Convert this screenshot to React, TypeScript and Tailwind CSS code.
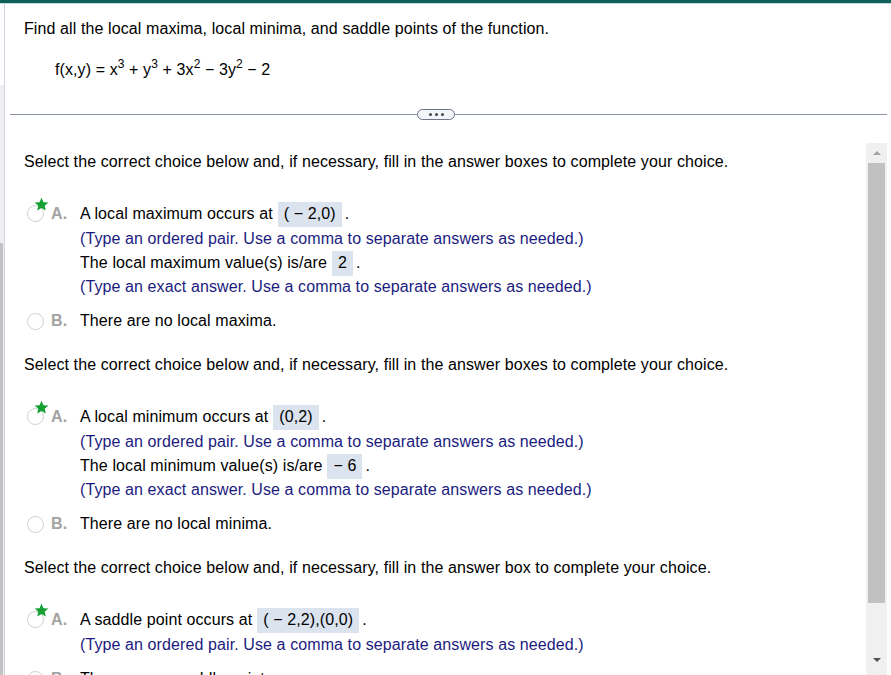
import React from 'react';

const Star = () => (
  <svg viewBox="0 0 24 24" className="absolute left-[10px] -top-[4px] w-[15px] h-[15px]">
    <path d="M12 1l3.2 7.2 7.8.7-5.9 5.1 1.8 7.7L12 17.7l-6.9 4 1.8-7.7L1 8.9l7.8-.7z" fill="#14a033" />
  </svg>
);

const Radio = ({ star }: { star?: boolean }) => (
  <div className="relative w-[27px] h-6 pl-[3px] flex items-center shrink-0">
    <div className="w-[17px] h-[17px] rounded-full border-[1.5px] border-[#cfcfcf] bg-white" />
    {star && <Star />}
  </div>
);

const Box = ({ children }: { children: React.ReactNode }) => (
  <span className="inline-flex items-center h-[25px] px-[6px] bg-[#dbe3ef] ml-[5px] mr-[3px]">{children}</span>
);

const Hint = ({ children }: { children: React.ReactNode }) => (
  <div className="h-6 leading-6 text-[#1b1b80]">{children}</div>
);

const Section = ({
  header,
  first,
  firstBox,
  hint1,
  second,
  secondBox,
  bText,
}: {
  header: string;
  first: string;
  firstBox: string;
  hint1: string;
  second?: string;
  secondBox?: string;
  bText: string;
}) => (
  <div>
    <div className="h-6 leading-6">{header}</div>
    <div className="flex mt-[27px]">
      <Radio star />
      <div className="w-[29px] h-[26px] leading-[26px] text-[#a3a3a3] font-bold shrink-0">A.</div>
      <div>
        <div className="h-[26px] flex items-center">
          {first}
          <Box>{firstBox}</Box>.
        </div>
        <Hint>{hint1}</Hint>
        {second && (
          <>
            <div className="h-6 flex items-center">
              {second}
              <Box>{secondBox}</Box>.
            </div>
            <Hint>(Type an exact answer. Use a comma to separate answers as needed.)</Hint>
          </>
        )}
      </div>
    </div>
    <div className="flex mt-[10px]">
      <Radio />
      <div className="w-[29px] h-6 leading-6 text-[#a3a3a3] font-bold shrink-0">B.</div>
      <div className="h-6 leading-6">{bText}</div>
    </div>
  </div>
);

export default function App() {
  const sel = 'Select the correct choice below and, if necessary, fill in the answer boxes to complete your choice.';
  const sup = 'text-[12px] relative -top-[7px] align-baseline';
  return (
    <div
      className="w-[891px] h-[675px] overflow-hidden bg-white text-black text-[16px] tracking-[0.1px] flex flex-col"
      style={{ fontFamily: '"Liberation Sans", Arial, sans-serif' }}
    >
      <div className="h-[3px] bg-[#0b6157] shrink-0" />
      <div className="h-px bg-[#c9d4e0] shrink-0" />
      <div className="flex flex-1 min-h-0">
        {/* outer left gutter */}
        <div className="w-[4px] flex flex-col shrink-0">
          <div className="h-[81px] bg-white" />
          <div className="h-[158px] bg-[#efefef]" />
          <div className="flex-1 bg-[#efefef] flex">
            <div className="w-[3px] bg-[#c2c2c2]" />
          </div>
        </div>
        <div className="w-px bg-[#cdd5e0] shrink-0" />
        <div className="flex-1 flex flex-col min-w-0">
          {/* question */}
          <div className="pl-[19px] pt-[13px]">
            <div className="h-6 leading-6">Find all the local maxima, local minima, and saddle points of the function.</div>
            <div className="pl-[31px] mt-[17px] h-6 leading-6">
              f(x,y) = x<sup className={sup}>3</sup> + y<sup className={sup}>3</sup> + 3x<sup className={sup}>2</sup> − 3y
              <sup className={sup}>2</sup> − 2
            </div>
          </div>
          {/* divider */}
          <div className="mt-[27px] pl-[5px] pr-[4px] flex items-center h-[11px]">
            <div className="flex-1 h-px bg-[#8894a1]" />
            <div className="w-[38px] h-[11px] rounded-full border border-[#6b7787] bg-[#f3f5f8] flex items-center justify-center gap-[3px]">
              <div className="w-[3px] h-[3px] rounded-full bg-[#3f4752]" />
              <div className="w-[3px] h-[3px] rounded-full bg-[#3f4752]" />
              <div className="w-[3px] h-[3px] rounded-full bg-[#3f4752]" />
            </div>
            <div className="w-[432px] h-px bg-[#8894a1]" />
          </div>
          {/* answer pane */}
          <div className="mt-[23px] flex flex-1 min-h-0">
            <div className="flex-1 pl-[19px] pt-[7px] flex flex-col gap-[20px]">
              <Section
                header={sel}
                first="A local maximum occurs at"
                firstBox="( − 2,0)"
                hint1="(Type an ordered pair. Use a comma to separate answers as needed.)"
                second="The local maximum value(s) is/are"
                secondBox="2"
                bText="There are no local maxima."
              />
              <Section
                header={sel}
                first="A local minimum occurs at"
                firstBox="(0,2)"
                hint1="(Type an ordered pair. Use a comma to separate answers as needed.)"
                second="The local minimum value(s) is/are"
                secondBox="− 6"
                bText="There are no local minima."
              />
              <Section
                header="Select the correct choice below and, if necessary, fill in the answer box to complete your choice."
                first="A saddle point occurs at"
                firstBox="( − 2,2),(0,0)"
                hint1="(Type an ordered pair. Use a comma to separate answers as needed.)"
                bText="There are no saddle points."
              />
            </div>
            {/* scrollbar */}
            <div className="w-[21px] mr-[4px] bg-[#f0f0f0] flex flex-col items-center shrink-0">
              <div className="h-[20px] flex items-center justify-center">
                <div className="w-0 h-0 border-l-[4px] border-r-[4px] border-b-[4px] border-l-transparent border-r-transparent border-b-[#a3a3a3]" />
              </div>
              <div className="w-[17px] h-[440px] bg-[#c1c1c1]" />
              <div className="flex-1" />
              <div className="h-[20px] mb-[5px] flex items-center justify-center">
                <div className="w-0 h-0 border-l-[4px] border-r-[4px] border-t-[4px] border-l-transparent border-r-transparent border-t-[#505050]" />
              </div>
            </div>
          </div>
        </div>
      </div>
    </div>
  );
}
